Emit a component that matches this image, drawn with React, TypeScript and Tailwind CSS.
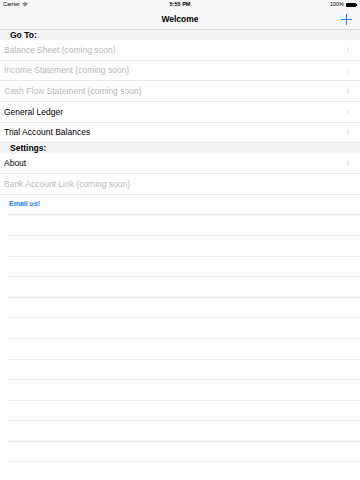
import { ChevronRight } from "lucide-react";

const goTo = [
  { label: "Balance Sheet (coming soon)", muted: true },
  { label: "Income Statement (coming soon)", muted: true },
  { label: "Cash Flow Statement (coming soon)", muted: true },
  { label: "General Ledger", muted: false },
  { label: "Trial Account Balances", muted: false },
];

const settings = [
  { label: "About", muted: false, chevron: true },
  { label: "Bank Account Link (coming soon)", muted: true, chevron: false },
];

function Row({ label, muted, chevron = true }: { label: string; muted: boolean; chevron?: boolean }) {
  return (
    <div className="flex h-[20.6px] items-center justify-between border-b border-[#e8e8ea] bg-white pl-[4px] pr-[8px]">
      <span className={`text-[8.5px] ${muted ? "text-[#b8b8b8]" : "text-black"}`}>{label}</span>
      {chevron && <ChevronRight className="h-[8px] w-[8px] text-[#cfcfd3]" strokeWidth={2} />}
    </div>
  );
}

function Header({ title }: { title: string }) {
  return (
    <div className="flex h-[10.3px] items-center bg-[#f4f4f5] pl-[10px] text-[8.5px] font-semibold text-black">
      {title}
    </div>
  );
}

export default function App() {
  return (
    <div
      className="h-[480px] w-[360px] overflow-hidden bg-white"
      style={{ fontFamily: '"Liberation Sans", Arial, sans-serif' }}
    >
      {/* Status + nav */}
      <div className="border-b border-[#dcdce0] bg-[#f8f8f8]">
        <div className="relative flex h-[9px] items-center justify-between px-[3px] text-[5.5px] text-black">
          <span className="flex items-center gap-[2px]">
            Carrier
            <svg width="6" height="5" viewBox="0 0 12 9">
              <path d="M6 8.5 L4.4 6.8 A2.3 2.3 0 0 1 7.6 6.8 Z" fill="#000" />
              <path d="M2.8 5.2 A4.6 4.6 0 0 1 9.2 5.2" stroke="#000" strokeWidth="1.3" fill="none" />
              <path d="M1 3.3 A7.2 7.2 0 0 1 11 3.3" stroke="#000" strokeWidth="1.3" fill="none" />
            </svg>
          </span>
          <span className="absolute left-1/2 -translate-x-1/2 font-bold">5:55 PM</span>
          <span className="flex items-center gap-[2px]">
            100%
            <span className="flex items-center">
              <span className="h-[4px] w-[10px] rounded-[1px] bg-black" />
              <span className="h-[2px] w-[1px] bg-black" />
            </span>
          </span>
        </div>
        <div className="relative flex h-[20px] items-center justify-center">
          <span className="text-[8.5px] font-bold text-black">Welcome</span>
          <span className="absolute right-[8px] top-[5px] h-[11px] w-[11px]">
            <span className="absolute left-[5px] top-0 h-[11px] w-[1px] bg-[#1a82fb]" />
            <span className="absolute left-0 top-[5px] h-[1px] w-[11px] bg-[#1a82fb]" />
          </span>
        </div>
      </div>

      <Header title="Go To:" />
      {goTo.map((r) => (
        <Row key={r.label} label={r.label} muted={r.muted} />
      ))}

      <Header title="Settings:" />
      {settings.map((r) => (
        <Row key={r.label} label={r.label} muted={r.muted} chevron={r.chevron} />
      ))}

      <div className="ml-[8px] flex h-[20.6px] items-center border-b border-[#ededef] pl-[1px]">
        <span className="text-[7px] font-bold text-[#1a82fb]">Email us!</span>
      </div>

      {Array.from({ length: 13 }).map((_, i) => (
        <div key={i} className="ml-[8px] h-[20.6px] border-b border-[#ededef]" />
      ))}
    </div>
  );
}
